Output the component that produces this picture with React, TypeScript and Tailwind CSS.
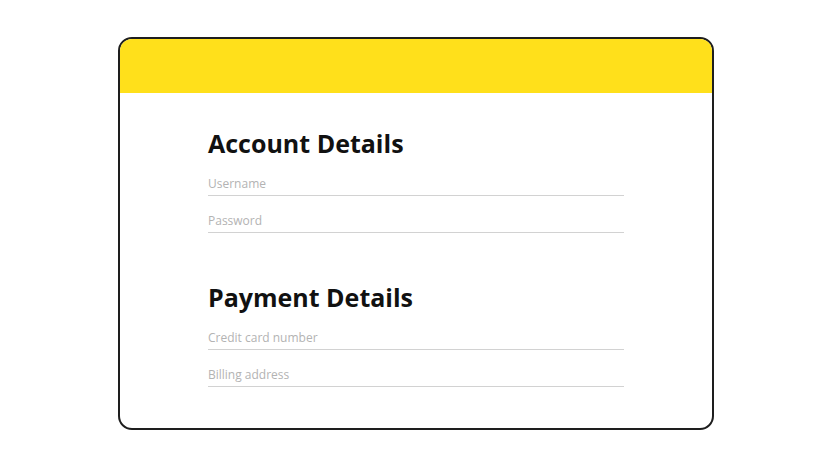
import React from 'react'

const fields = {
  account: ['Username', 'Password'],
  payment: ['Credit card number', 'Billing address'],
}

function Field({ label, first }: { label: string; first?: boolean }) {
  return (
    <div className={first ? 'mt-[17px]' : 'mt-[17.5px]'}>
      <div className="pb-[3px] border-b-[1.5px] border-[#d2d2d2] text-[12px] leading-[16px] text-[#b3b3b3]">
        {label}
      </div>
    </div>
  )
}

function Section({ title, items }: { title: string; items: string[] }) {
  return (
    <div>
      <h2 className="text-[25px] leading-[32px] font-bold text-[#111]">{title}</h2>
      {items.map((item, i) => (
        <Field key={item} label={item} first={i === 0} />
      ))}
    </div>
  )
}

export default function App() {
  return (
    <div
      className="w-full h-[466px] bg-white flex items-center justify-center"
      style={{ fontFamily: '"Open Sans", "Noto Sans", sans-serif' }}
    >
      <div className="w-[596px] h-[393px] border-2 border-[#1e1e1e] rounded-[14px] overflow-hidden bg-white flex flex-col">
        <div className="h-[54px] bg-[#ffe01b]" />
        <div className="pl-[88px] pt-[34px] w-[504px] flex flex-col gap-[47.5px]">
          <Section title="Account Details" items={fields.account} />
          <Section title="Payment Details" items={fields.payment} />
        </div>
      </div>
    </div>
  )
}
